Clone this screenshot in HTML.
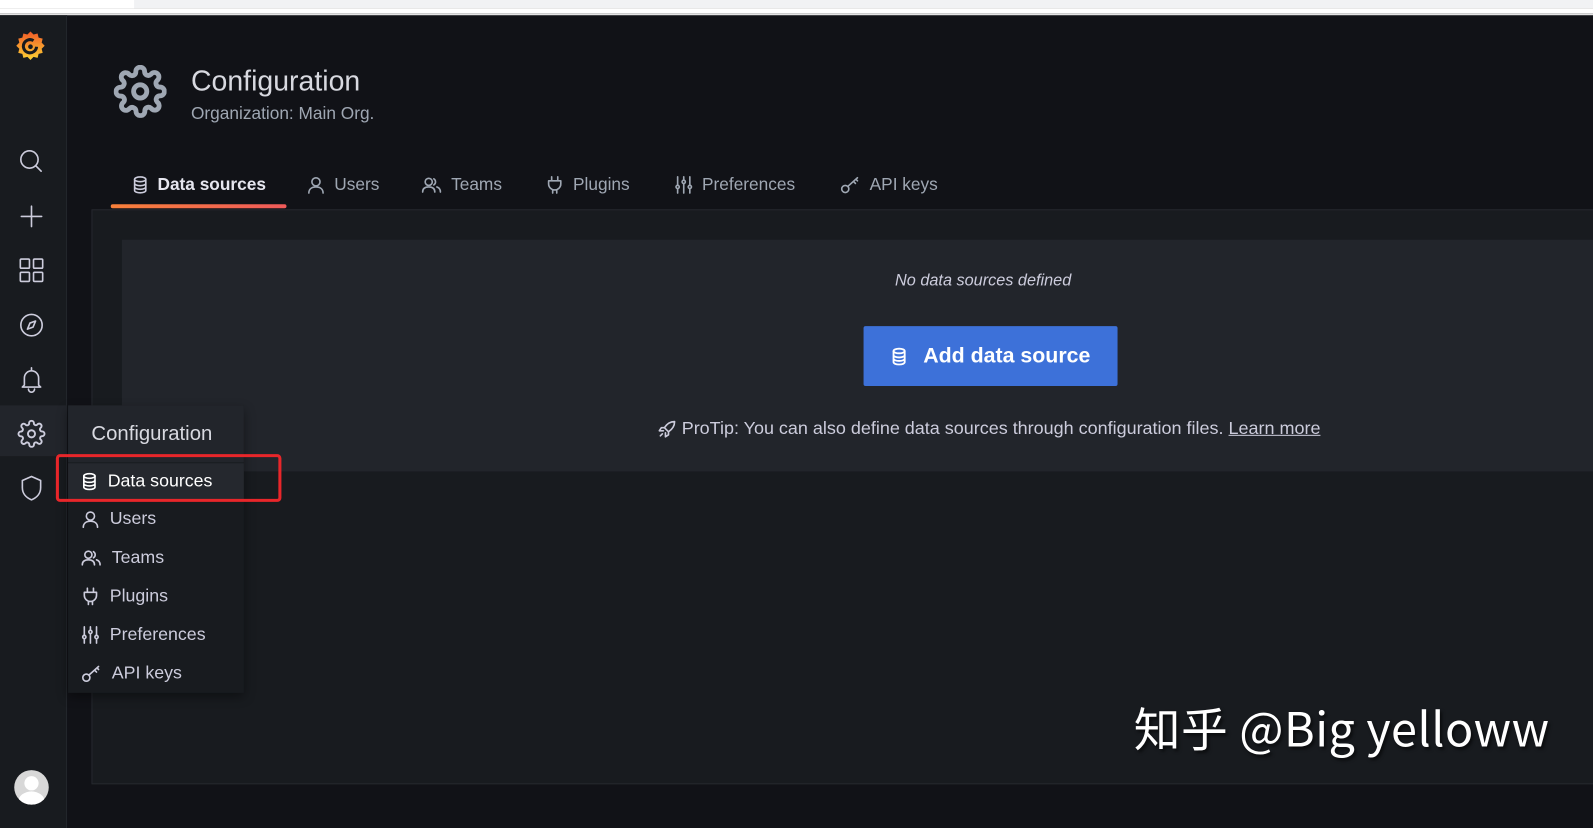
<!DOCTYPE html>
<html><head><meta charset="utf-8"><style>
*{margin:0;padding:0;box-sizing:border-box}
body{width:1593px;height:806px;overflow:hidden;background:#111217;font-family:"Liberation Sans",sans-serif;position:relative;color:#ccccdc}
#w{position:absolute;left:0;top:0;width:1568px;height:794px;transform:scale(1.01595);transform-origin:0 0}
.abs{position:absolute}
svg{display:block}
.ic{stroke:#ccccdc;fill:none;stroke-width:1.6;stroke-linecap:round;stroke-linejoin:round}
.tab{position:absolute;top:172px;font-size:17px;color:#9fa7b3;display:flex;align-items:center;gap:9px}
.mi{position:absolute;left:80px;font-size:17.5px;color:#ccccdc;display:flex;align-items:center;gap:10px}
</style></head><body><div id="w">
<div class="abs" style="left:0;top:0;width:1600px;height:8px;background:#f1f2f4"></div>
<div class="abs" style="left:0;top:8px;width:1600px;height:5px;background:#fff"></div>
<div class="abs" style="left:0;top:13px;width:1600px;height:2px;background:#e4e4e4"></div>
<div class="abs" style="left:0;top:0;width:132px;height:8px;background:#fff"></div>

<div class="abs" style="left:0;top:15px;width:66px;height:800px;background:#181b1f;border-right:1px solid #23262c"></div>
<div class="abs" style="left:0;top:399px;width:66px;height:50px;background:#22252b"></div>
<svg class="abs" style="left:13px;top:28px" width="34" height="34" viewBox="0 0 34 34">
<defs><linearGradient id="g" x1="0" y1="1" x2="0" y2="0"><stop offset="0" stop-color="#fcd233"/><stop offset="1" stop-color="#f05a28"/></linearGradient></defs>
<path d="M17 3l3 3 4-1 1 4 4 1-1 4 3 3-3 3 1 4-4 1-1 4-4-1-3 3-3-3-4 1-1-4-4-1 1-4-3-3 3-3-1-4 4-1 1-4 4 1z" fill="url(#g)"/>
<path d="M20 12a6.5 6.5 0 1 0 3 6" fill="none" stroke="#181b1f" stroke-width="3"/><circle cx="17" cy="18" r="2.3" fill="#181b1f"/>
</svg>
<svg class="abs ic" style="left:18px;top:146px" width="26" height="26" viewBox="0 0 26 26"><circle cx="11" cy="11" r="8.5"/><path d="M17.5 17.5l5 5"/></svg>
<svg class="abs ic" style="left:19px;top:201px" width="24" height="24" viewBox="0 0 24 24"><path d="M12 2v20M2 12h20"/></svg>
<svg class="abs ic" style="left:18px;top:253px" width="26" height="26" viewBox="0 0 26 26"><rect x="2" y="2" width="9" height="9" rx="1"/><rect x="15" y="2" width="9" height="9" rx="1"/><rect x="2" y="15" width="9" height="9" rx="1"/><rect x="15" y="15" width="9" height="9" rx="1"/></svg>
<svg class="abs ic" style="left:18px;top:307px" width="26" height="26" viewBox="0 0 26 26"><circle cx="13" cy="13" r="10.5"/><path d="M17 9l-2.5 6L9 17l2.5-6z"/></svg>
<svg class="abs ic" style="left:19px;top:359px" width="24" height="28" viewBox="0 0 24 28"><path d="M12 3v2M5 20V13a7 7 0 0 1 14 0v7l2 2H3z M9 24a3 3 0 0 0 6 0"/></svg>
<svg class="abs ic" style="left:17px;top:413px" width="28" height="28" viewBox="0 0 24 24"><circle cx="12" cy="12" r="3"/><path d="M19.4 15a1.7 1.7 0 0 0 .3 1.8l.1.1a2 2 0 1 1-2.8 2.8l-.1-.1a1.7 1.7 0 0 0-1.8-.3 1.7 1.7 0 0 0-1 1.5V21a2 2 0 1 1-4 0v-.1a1.7 1.7 0 0 0-1.1-1.5 1.7 1.7 0 0 0-1.8.3l-.1.1a2 2 0 1 1-2.8-2.8l.1-.1a1.7 1.7 0 0 0 .3-1.8 1.7 1.7 0 0 0-1.5-1H3a2 2 0 1 1 0-4h.1a1.7 1.7 0 0 0 1.5-1.1 1.7 1.7 0 0 0-.3-1.8l-.1-.1a2 2 0 1 1 2.8-2.8l.1.1a1.7 1.7 0 0 0 1.8.3H9a1.7 1.7 0 0 0 1-1.5V3a2 2 0 1 1 4 0v.1a1.7 1.7 0 0 0 1 1.5 1.7 1.7 0 0 0 1.8-.3l.1-.1a2 2 0 1 1 2.8 2.8l-.1.1a1.7 1.7 0 0 0-.3 1.8V9a1.7 1.7 0 0 0 1.5 1H21a2 2 0 1 1 0 4h-.1a1.7 1.7 0 0 0-1.5 1z"/></svg>
<svg class="abs ic" style="left:19px;top:467px" width="24" height="28" viewBox="0 0 24 28"><path d="M12 2L3 6v7c0 6 4 10 9 12 5-2 9-6 9-12V6z"/></svg>
<div class="abs" style="left:14px;top:758px;width:34px;height:34px;border-radius:50%;background:#d8d8d8;overflow:hidden">
<div class="abs" style="left:10px;top:6px;width:14px;height:14px;border-radius:50%;background:#fff"></div>
<div class="abs" style="left:4px;top:21px;width:26px;height:20px;border-radius:50%;background:#fff"></div></div>

<svg class="abs" style="left:112px;top:64px;stroke:#9fa7b3;fill:none;stroke-width:2.2;stroke-linejoin:round" width="52" height="52" viewBox="0 0 24 24"><circle cx="12" cy="12" r="3"/><path d="M19.4 15a1.7 1.7 0 0 0 .3 1.8l.1.1a2 2 0 1 1-2.8 2.8l-.1-.1a1.7 1.7 0 0 0-1.8-.3 1.7 1.7 0 0 0-1 1.5V21a2 2 0 1 1-4 0v-.1a1.7 1.7 0 0 0-1.1-1.5 1.7 1.7 0 0 0-1.8.3l-.1.1a2 2 0 1 1-2.8-2.8l.1-.1a1.7 1.7 0 0 0 .3-1.8 1.7 1.7 0 0 0-1.5-1H3a2 2 0 1 1 0-4h.1a1.7 1.7 0 0 0 1.5-1.1 1.7 1.7 0 0 0-.3-1.8l-.1-.1a2 2 0 1 1 2.8-2.8l.1.1a1.7 1.7 0 0 0 1.8.3H9a1.7 1.7 0 0 0 1-1.5V3a2 2 0 1 1 4 0v.1a1.7 1.7 0 0 0 1 1.5 1.7 1.7 0 0 0 1.8-.3l.1-.1a2 2 0 1 1 2.8 2.8l-.1.1a1.7 1.7 0 0 0-.3 1.8V9a1.7 1.7 0 0 0 1.5 1H21a2 2 0 1 1 0 4h-.1a1.7 1.7 0 0 0-1.5 1z"/></svg>
<div class="abs" style="left:188px;top:64px;font-size:28px;color:#d8d9e0">Configuration</div>
<div class="abs" style="left:188px;top:102px;font-size:17px;color:#9fa7b3">Organization: Main Org.</div>

<div class="tab" style="left:130px;color:#e6e6ef;font-weight:bold">
<svg class="ic" width="16" height="18" viewBox="0 0 16 18"><ellipse cx="8" cy="3.5" rx="5.5" ry="2.3"/><path d="M2.5 3.5v11c0 1.3 2.5 2.3 5.5 2.3s5.5-1 5.5-2.3v-11M2.5 7.5c0 1.3 2.5 2.3 5.5 2.3s5.5-1 5.5-2.3M2.5 11c0 1.3 2.5 2.3 5.5 2.3s5.5-1 5.5-2.3"/></svg>Data sources</div>
<div class="abs" style="left:109px;top:201px;width:173px;height:4px;border-radius:2px;background:linear-gradient(90deg,#f8803a,#f05a5a)"></div>
<div class="tab" style="left:302px"><svg class="ic" style="stroke:#9fa7b3" width="18" height="18" viewBox="0 0 18 18"><circle cx="9" cy="6" r="4"/><path d="M2 17c0-4 3-6 7-6s7 2 7 6"/></svg>Users</div>
<div class="tab" style="left:415px"><svg class="ic" style="stroke:#9fa7b3" width="20" height="18" viewBox="0 0 20 18"><circle cx="7" cy="6" r="3.5"/><path d="M1 16c0-3.5 2.5-5 6-5s6 1.5 6 5M12 3a3.5 3.5 0 0 1 0 6M15 11c2 .6 3.5 2 3.5 5"/></svg>Teams</div>
<div class="tab" style="left:537px"><svg class="ic" style="stroke:#9fa7b3" width="18" height="18" viewBox="0 0 18 18"><path d="M6 1v4M12 1v4M3 5h12v3a6 6 0 0 1-12 0zM7 14v3M11 14v3"/></svg>Plugins</div>
<div class="tab" style="left:664px"><svg class="ic" style="stroke:#9fa7b3" width="18" height="18" viewBox="0 0 18 18"><path d="M3 1v16M9 1v16M15 1v16"/><circle cx="3" cy="11" r="1.6" fill="#111217"/><circle cx="9" cy="6" r="1.6" fill="#111217"/><circle cx="15" cy="11" r="1.6" fill="#111217"/></svg>Preferences</div>
<div class="tab" style="left:827px"><svg class="ic" style="stroke:#9fa7b3" width="20" height="18" viewBox="0 0 20 18"><circle cx="5" cy="13" r="3.5"/><path d="M7.5 10.5L17 2M13 5.5l2 2M15.5 3.5l1.5 1.5"/></svg>API keys</div>

<div class="abs" style="left:90px;top:206px;width:1510px;height:566px;background:#181b1f;border:1px solid #25282e"></div>
<div class="abs" style="left:120px;top:236px;width:1480px;height:228px;background:#22252b"></div>
<div class="abs" style="left:881px;top:268px;font-size:16px;font-style:italic;color:#ccccdc">No data sources defined</div>
<div class="abs" style="left:850px;top:321px;width:250px;height:59px;background:#3d71d9;border-radius:2px;display:flex;align-items:center;justify-content:center;gap:16px;color:#fff;font-size:21px;font-weight:bold">
<svg style="stroke:#fff;fill:none;stroke-width:1.8" width="16" height="18" viewBox="0 0 16 18"><ellipse cx="8" cy="3.5" rx="5.5" ry="2.3"/><path d="M2.5 3.5v11c0 1.3 2.5 2.3 5.5 2.3s5.5-1 5.5-2.3v-11M2.5 7.5c0 1.3 2.5 2.3 5.5 2.3s5.5-1 5.5-2.3M2.5 11c0 1.3 2.5 2.3 5.5 2.3s5.5-1 5.5-2.3"/></svg>Add data source</div>
<div class="abs" style="left:648px;top:411px;font-size:17.7px;color:#ccccdc;display:flex;align-items:center;gap:5px;white-space:nowrap">
<svg class="ic" width="18" height="18" viewBox="0 0 18 18"><path d="M16 2c-5 0-8 3-10 6l4 4c3-2 6-5 6-10zM6 8L3 8 1 11h4M10 12v3l-3 2v-4M4 14l-2 2"/></svg>ProTip: You can also define data sources through configuration files. <span style="text-decoration:underline">Learn more</span></div>

<div class="abs" style="left:67px;top:399px;width:173px;height:283px;background:#181b1f;box-shadow:0 4px 10px rgba(0,0,0,.4)"></div>
<div class="abs" style="left:67px;top:399px;width:173px;height:56px;background:#22252b"></div>
<div class="abs" style="left:90px;top:416px;font-size:20px;color:#d8d9e0">Configuration</div>
<div class="abs" style="left:67px;top:456px;width:173px;height:36px;background:#25282e"></div>
<div class="mi" style="top:463px;color:#fff"><svg class="ic" style="stroke:#fff" width="16" height="18" viewBox="0 0 16 18"><ellipse cx="8" cy="3.5" rx="5.5" ry="2.3"/><path d="M2.5 3.5v11c0 1.3 2.5 2.3 5.5 2.3s5.5-1 5.5-2.3v-11M2.5 7.5c0 1.3 2.5 2.3 5.5 2.3s5.5-1 5.5-2.3M2.5 11c0 1.3 2.5 2.3 5.5 2.3s5.5-1 5.5-2.3"/></svg>Data sources</div>
<div class="mi" style="top:500px"><svg class="ic" width="18" height="18" viewBox="0 0 18 18"><circle cx="9" cy="6" r="4"/><path d="M2 17c0-4 3-6 7-6s7 2 7 6"/></svg>Users</div>
<div class="mi" style="top:538px"><svg class="ic" width="20" height="18" viewBox="0 0 20 18"><circle cx="7" cy="6" r="3.5"/><path d="M1 16c0-3.5 2.5-5 6-5s6 1.5 6 5M12 3a3.5 3.5 0 0 1 0 6M15 11c2 .6 3.5 2 3.5 5"/></svg>Teams</div>
<div class="mi" style="top:576px"><svg class="ic" width="18" height="18" viewBox="0 0 18 18"><path d="M6 1v4M12 1v4M3 5h12v3a6 6 0 0 1-12 0zM7 14v3M11 14v3"/></svg>Plugins</div>
<div class="mi" style="top:614px"><svg class="ic" width="18" height="18" viewBox="0 0 18 18"><path d="M3 1v16M9 1v16M15 1v16"/><circle cx="3" cy="11" r="1.6" fill="#181b1f"/><circle cx="9" cy="6" r="1.6" fill="#181b1f"/><circle cx="15" cy="11" r="1.6" fill="#181b1f"/></svg>Preferences</div>
<div class="mi" style="top:652px"><svg class="ic" width="20" height="18" viewBox="0 0 20 18"><circle cx="5" cy="13" r="3.5"/><path d="M7.5 10.5L17 2M13 5.5l2 2M15.5 3.5l1.5 1.5"/></svg>API keys</div>
<div class="abs" style="left:55px;top:447px;width:222px;height:47px;border:3px solid #e8262a;border-radius:4px"></div>

<div class="abs" style="left:1116px;top:683px;font-size:46px;letter-spacing:0.5px;color:#fff;font-family:'Noto Sans CJK SC','Liberation Sans',sans-serif;text-shadow:2px 2px 3px rgba(0,0,0,.6);white-space:nowrap">知乎 @Big yelloww</div>
</div></body></html>
